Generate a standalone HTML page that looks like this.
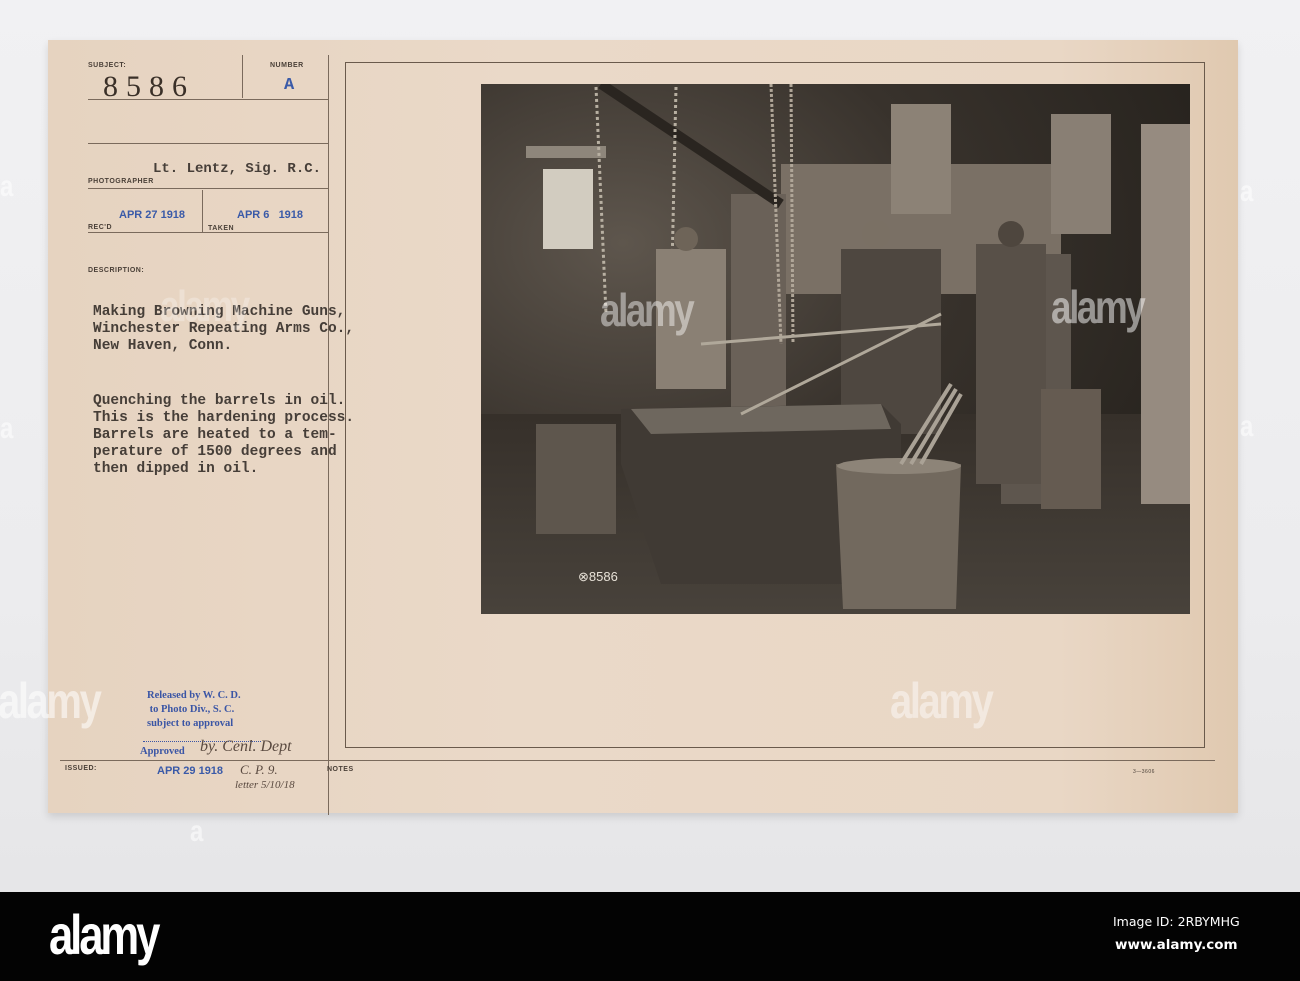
<!DOCTYPE html>
<html><head><meta charset="utf-8"><style>
*{margin:0;padding:0;box-sizing:border-box}
body{width:1300px;height:981px;overflow:hidden;background:linear-gradient(180deg,#f1f1f3 0%,#ececee 60%,#e4e4e6 100%);position:relative;font-family:"Liberation Mono",monospace}
.card{position:absolute;left:48px;top:40px;width:1190px;height:773px;background:linear-gradient(90deg,#e6d3c0 0%,#ead9c8 40%,#e9d7c5 85%,#e0c9b0 100%);box-shadow:0 4px 8px rgba(0,0,0,.12)}
.a{position:absolute}
.hl{position:absolute;height:1px;background:#7a6a5c}
.vl{position:absolute;width:1px;background:#7a6a5c}
.lab{position:absolute;font-family:"Liberation Sans",sans-serif;font-size:7px;color:#4a4038;letter-spacing:.5px;font-weight:bold}
.tw{position:absolute;font-family:"Liberation Mono",monospace;font-size:14.5px;color:#2a2420;line-height:17px;white-space:pre;font-weight:bold;opacity:.85}
.blue{position:absolute;font-family:"Liberation Sans",sans-serif;color:#3a5aa8;font-weight:bold;font-size:11px}
.st{position:absolute;font-family:"Liberation Serif",serif;color:#3a55a5;font-weight:bold;font-size:10.5px;line-height:14px}
.hw{position:absolute;font-family:"Liberation Serif",serif;font-style:italic;color:#5a4a40}
.wm{position:absolute;font-family:"Liberation Sans",sans-serif;font-weight:bold;color:rgba(255,255,255,.55);letter-spacing:-3px;transform:scaleX(.8);transform-origin:left}
</style></head><body>
<div class="card"></div>
<div class="hl" style="left:88px;top:99px;width:240px"></div>
<div class="hl" style="left:88px;top:143px;width:240px"></div>
<div class="hl" style="left:88px;top:188px;width:240px"></div>
<div class="hl" style="left:88px;top:232px;width:240px"></div>
<div class="vl" style="left:242px;top:55px;height:43px"></div>
<div class="vl" style="left:202px;top:190px;height:42px"></div>
<div class="vl" style="left:328px;top:55px;height:760px"></div>
<div class="hl" style="left:60px;top:760px;width:1155px"></div>
<div class="a" style="left:345px;top:62px;width:860px;height:686px;border:1px solid #6a5a4c"></div>

<div class="lab" style="left:88px;top:62px">SUBJECT:</div>
<div class="lab" style="left:270px;top:62px">NUMBER</div>
<div class="hw" style="left:103px;top:70px;font-size:30px;font-style:normal;letter-spacing:8px;font-weight:normal;color:#3a3028">8586</div>
<div class="blue" style="left:284px;top:76px;font-size:17px;font-family:'Liberation Mono',monospace">A</div>
<div class="tw" style="left:153px;top:161px;font-size:14px">Lt. Lentz, Sig. R.C.</div>
<div class="lab" style="left:88px;top:178px">PHOTOGRAPHER</div>
<div class="lab" style="left:88px;top:224px">REC'D</div>
<div class="blue" style="left:119px;top:209px">APR 27 1918</div>
<div class="lab" style="left:208px;top:225px">TAKEN</div>
<div class="blue" style="left:237px;top:209px">APR 6&nbsp;&nbsp; 1918</div>
<div class="lab" style="left:88px;top:267px">DESCRIPTION:</div>
<div class="tw" style="left:93px;top:304px">Making Browning Machine Guns,
Winchester Repeating Arms Co.,
New Haven, Conn.</div>
<div class="tw" style="left:93px;top:393px">Quenching the barrels in oil.
This is the hardening process.
Barrels are heated to a tem-
perature of 1500 degrees and
then dipped in oil.</div>

<div class="st" style="left:147px;top:689px">Released by W. C. D.<br>&nbsp;to Photo Div., S. C.<br>subject to approval</div>
<div class="a" style="left:143px;top:741px;width:118px;border-top:1px dotted #3a55a5"></div>
<div class="st" style="left:140px;top:745px">Approved</div>
<div class="hw" style="left:200px;top:738px;font-size:16px">by. Cenl. Dept</div>
<div class="lab" style="left:65px;top:765px">ISSUED:</div>
<div class="blue" style="left:157px;top:765px">APR 29 1918</div>
<div class="hw" style="left:240px;top:762px;font-size:13px">C. P. 9.</div>
<div class="hw" style="left:235px;top:779px;font-size:11px">letter 5/10/18</div>
<div class="lab" style="left:327px;top:766px">NOTES</div>
<div class="lab" style="left:1133px;top:769px;font-weight:normal;font-size:5px">3—3606</div>

<svg class="a" style="left:481px;top:84px" width="709" height="530" viewBox="0 0 709 530">
<defs>
<radialGradient id="bg" cx="0.2" cy="0.3" r="0.9"><stop offset="0" stop-color="#5e564d"/><stop offset="0.5" stop-color="#38322c"/><stop offset="1" stop-color="#26221d"/></radialGradient>
<linearGradient id="fl" x1="0" y1="0" x2="0" y2="1"><stop offset="0" stop-color="#36302a"/><stop offset="1" stop-color="#48423b"/></linearGradient>
</defs>
<rect width="709" height="530" fill="url(#bg)"/>
<rect x="0" y="330" width="709" height="200" fill="url(#fl)"/>
<rect x="62" y="85" width="50" height="80" fill="#d2ccc0"/>
<rect x="45" y="62" width="80" height="12" fill="#8e867b"/>
<rect x="300" y="80" width="280" height="130" fill="#7a7065"/>
<rect x="250" y="110" width="55" height="230" fill="#6a6158"/>
<rect x="410" y="20" width="60" height="110" fill="#8c8276"/>
<rect x="570" y="30" width="60" height="120" fill="#897f74"/>
<rect x="660" y="40" width="49" height="380" fill="#968b80"/>
<rect x="520" y="170" width="70" height="250" fill="#5e564e"/>
<path d="M120 0 L300 120" stroke="#2a2520" stroke-width="10"/>
<path d="M115 3 L125 230 M195 3 L190 230" stroke="#b8b0a2" stroke-width="3" stroke-dasharray="3 3"/>
<path d="M290 0 L300 260 M310 0 L312 260" stroke="#b0a698" stroke-width="3" stroke-dasharray="3 2"/>
<rect x="175" y="165" width="70" height="140" fill="#8a8074"/>
<circle cx="205" cy="155" r="12" fill="#6e6458"/>
<rect x="360" y="165" width="100" height="185" fill="#4e4740"/>
<circle cx="395" cy="150" r="14" fill="#7a7064"/>
<rect x="495" y="160" width="70" height="240" fill="#585048"/>
<circle cx="530" cy="150" r="13" fill="#4e463e"/>
<path d="M140 325 L400 320 L420 340 L420 500 L180 500 L140 380 Z" fill="#403a34"/>
<path d="M150 325 L400 320 L410 345 L170 350 Z" fill="#6e675e"/>
<rect x="55" y="340" width="80" height="110" fill="#5e564d"/>
<rect x="560" y="305" width="60" height="120" fill="#655b51"/>
<path d="M355 380 L480 380 L475 525 L362 525 Z" fill="#72695e"/>
<ellipse cx="418" cy="382" rx="62" ry="8" fill="#8d8478"/>
<path d="M420 380 L470 300 M430 380 L475 305 M440 380 L480 310" stroke="#aaa296" stroke-width="4"/>
<path d="M220 260 L460 240 M260 330 L460 230" stroke="#b0a89a" stroke-width="3"/>
<text x="97" y="497" font-family="Liberation Sans,sans-serif" font-size="13" fill="#e8e2d8">⊗8586</text>
</svg>

<div class="wm" style="left:160px;top:282px;font-size:44px;color:rgba(255,255,255,.28)">alamy</div>
<div class="wm" style="left:-2px;top:672px;font-size:50px">alamy</div>
<div class="wm" style="left:890px;top:672px;font-size:50px;color:rgba(255,255,255,.45)">alamy</div>
<div class="wm" style="left:600px;top:283px;font-size:46px;color:rgba(255,255,255,.45)">alamy</div>
<div class="wm" style="left:1051px;top:280px;font-size:46px;color:rgba(255,255,255,.5)">alamy</div>
<div class="wm" style="left:190px;top:815px;font-size:30px">a</div>
<div class="wm" style="left:1240px;top:175px;font-size:30px">a</div>
<div class="wm" style="left:0;top:170px;font-size:30px">a</div>
<div class="wm" style="left:0;top:412px;font-size:30px">a</div>
<div class="wm" style="left:1240px;top:410px;font-size:30px">a</div>

<div class="a" style="left:0;top:892px;width:1300px;height:89px;background:#030303"></div>
<div class="a" style="left:49px;top:902px;font-family:'Liberation Sans',sans-serif;font-weight:bold;font-size:56px;color:#fff;letter-spacing:-4px;transform:scaleX(.78);transform-origin:left">alamy</div>
<div class="a" style="left:1113px;top:914px;font-family:'DejaVu Sans',sans-serif;font-size:12.5px;color:#fff">Image ID: 2RBYMHG</div>
<div class="a" style="left:1115px;top:937px;font-family:'DejaVu Sans',sans-serif;font-weight:bold;font-size:13.5px;color:#fff">www.alamy.com</div>
</body></html>
